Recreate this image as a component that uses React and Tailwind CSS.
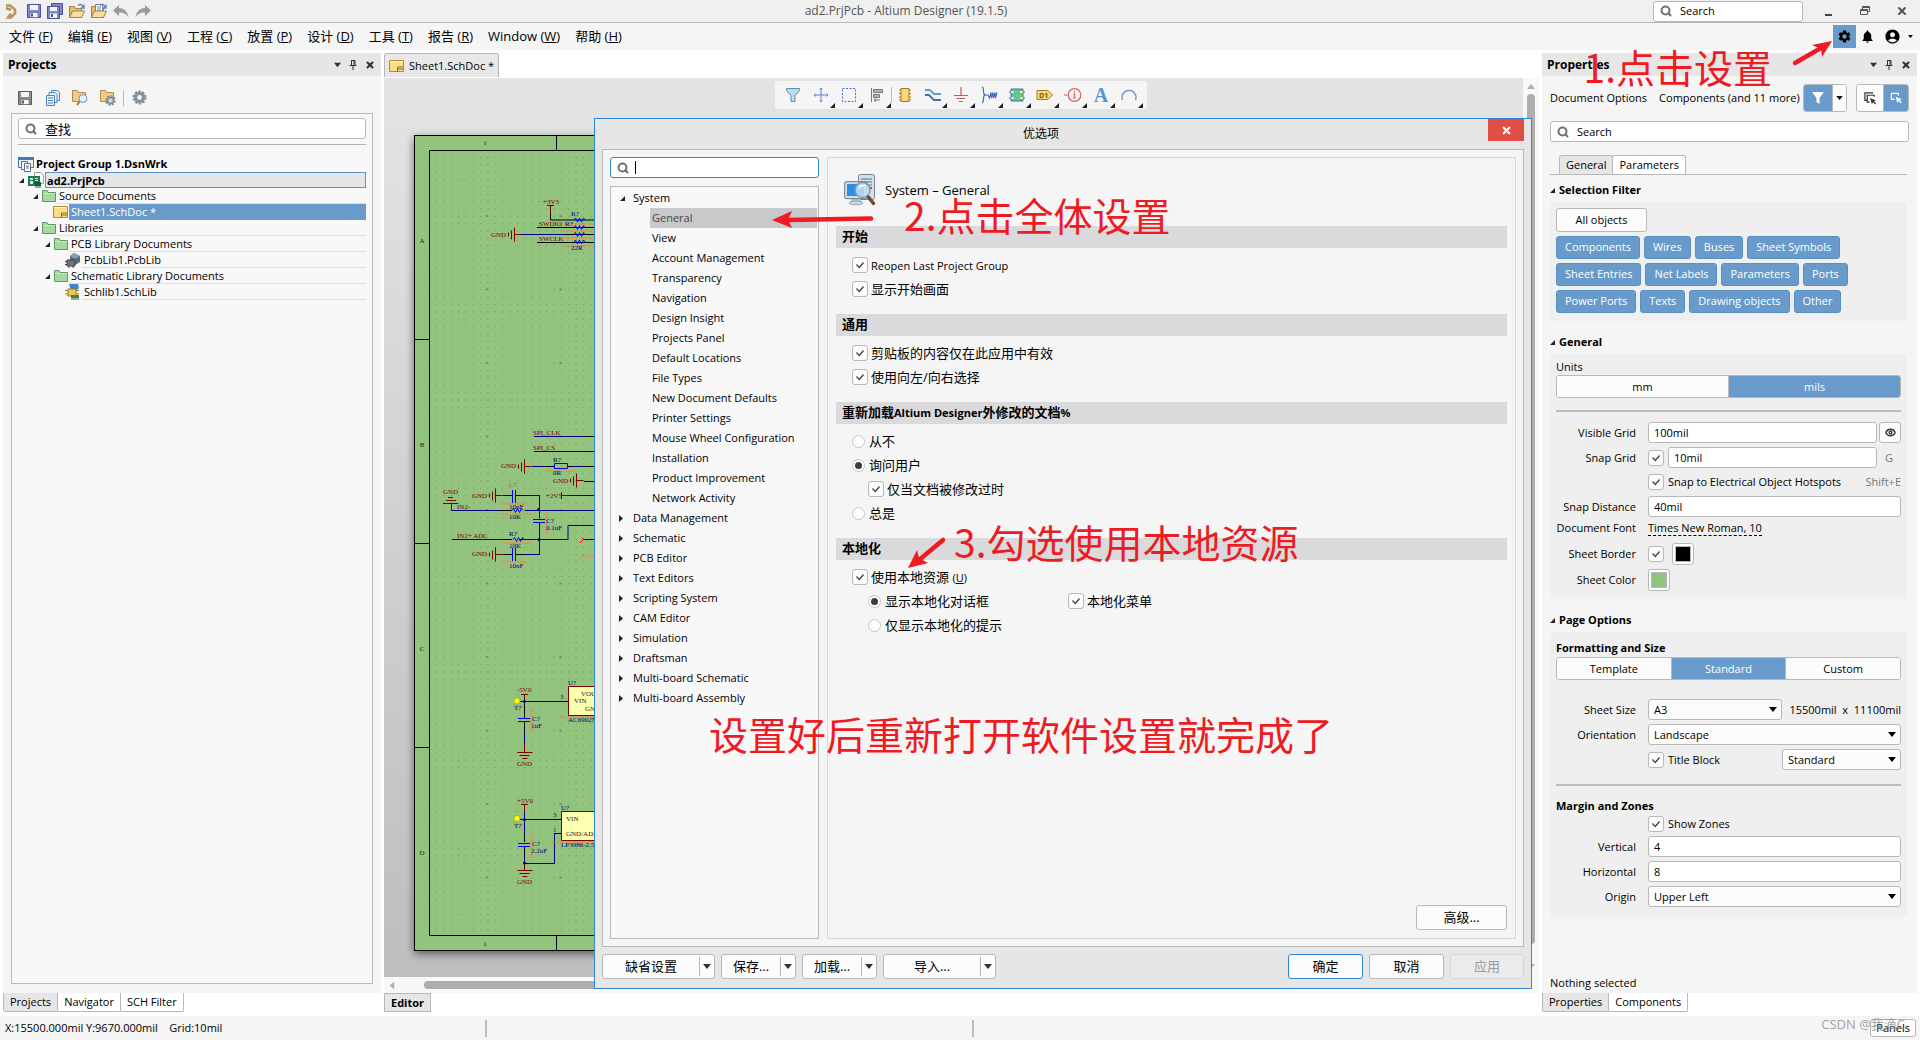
import { MdSettings, MdNotifications, MdAccountCircle } from 'react-icons/md';
import { Search as SearchIcon, X, Eye } from 'lucide-react';

const menus = [
  ['文件', 'F'], ['编辑', 'E'], ['视图', 'V'], ['工程', 'C'], ['放置', 'P'],
  ['设计', 'D'], ['工具', 'T'], ['报告', 'R'], ['Window', 'W'], ['帮助', 'H'],
];

const systemPages = [
  'General', 'View', 'Account Management', 'Transparency', 'Navigation', 'Design Insight',
  'Projects Panel', 'Default Locations', 'File Types', 'New Document Defaults', 'Printer Settings',
  'Mouse Wheel Configuration', 'Installation', 'Product Improvement', 'Network Activity',
];

const otherPages = [
  'Data Management', 'Schematic', 'PCB Editor', 'Text Editors', 'Scripting System', 'CAM Editor',
  'Simulation', 'Draftsman', 'Multi-board Schematic', 'Multi-board Assembly',
];

const filters = [
  ['Components', 'Wires', 'Buses', 'Sheet Symbols'],
  ['Sheet Entries', 'Net Labels', 'Parameters', 'Ports'],
  ['Power Ports', 'Texts', 'Drawing objects', 'Other'],
];

/* ---------- small pieces ---------- */

function Down({ className = 'w-2 h-[5px]' }) {
  return (
    <svg viewBox="0 0 8 5" className={className} fill="currentColor">
      <path d="M0 0h8L4 5z" />
    </svg>
  );
}

function Expanded() {
  return (
    <svg viewBox="0 0 5 5" className="w-[5px] h-[5px] shrink-0" fill="#222">
      <path d="M5 0v5H0z" />
    </svg>
  );
}

function Collapsed() {
  return (
    <svg viewBox="0 0 4 7" className="w-1 h-[7px] shrink-0" fill="#222">
      <path d="M0 0l4 3.5L0 7z" />
    </svg>
  );
}

function Check({ id, label }) {
  return (
    <span className="grid w-4 h-4 shrink-0">
      <input
        id={id}
        type="checkbox"
        defaultChecked
        aria-label={label}
        className="peer [grid-area:1/1] appearance-none w-4 h-4 rounded-[3px] border border-[#b8b8b8] bg-[#fcfcfc]"
      />
      <svg viewBox="0 0 16 16" className="[grid-area:1/1] w-4 h-4 pointer-events-none invisible peer-checked:visible" fill="none" stroke="#444" strokeWidth="1.3">
        <path d="M4.500 7.500l2.800 3 4.200-5" />
      </svg>
    </span>
  );
}

function CheckRow({ id, children, className = '' }) {
  return (
    <div className={`flex items-center gap-[3px] h-6 ${className}`}>
      <Check id={id} />
      <label htmlFor={id}>{children}</label>
    </div>
  );
}

function RadioRow({ id, name, checked, children, className = '' }) {
  return (
    <div className={`flex items-center gap-1 h-6 ${className}`}>
      <span className="grid place-items-center w-[13px] h-[13px]">
        <input
          id={id}
          name={name}
          type="radio"
          defaultChecked={checked}
          className="peer [grid-area:1/1] appearance-none w-[13px] h-[13px] rounded-full border border-[#c4c4c4] bg-[#fcfcfc]"
        />
        <span className="[grid-area:1/1] w-[7px] h-[7px] rounded-full bg-[#3c3c3c] invisible peer-checked:visible pointer-events-none" />
      </span>
      <label htmlFor={id}>{children}</label>
    </div>
  );
}

function SearchBox({ label, placeholder, className, caret }) {
  return (
    <div className={`flex items-center h-[21px] rounded-[3px] border bg-white pl-[6px] ${className}`}>
      <SearchIcon className="w-3 h-3 text-[#707070] shrink-0" strokeWidth={4} />
      {caret && <span className="w-px h-[13px] bg-black ml-[6px]" />}
      <input
        type="text"
        aria-label={label}
        placeholder={placeholder}
        className="min-w-0 flex-1 bg-transparent outline-none pl-2 placeholder:text-black"
      />
    </div>
  );
}

function Field({ id, value, className = '' }) {
  return (
    <input
      id={id}
      type="text"
      defaultValue={value}
      className={`h-[21px] min-w-0 rounded-[3px] border border-[#b8b8b8] bg-white px-[5px] ${className}`}
    />
  );
}

function Select({ id, value, label, className = '' }) {
  return (
    <span className={`grid items-center ${className}`}>
      <select
        id={id}
        aria-label={label}
        className="[grid-area:1/1] appearance-none w-full h-[21px] rounded-[3px] border border-[#b8b8b8] bg-[#fcfcfc] px-[5px]"
      >
        <option>{value}</option>
      </select>
      <Down className="[grid-area:1/1] justify-self-end w-2 h-[5px] mr-[5px] pointer-events-none" />
    </span>
  );
}

function Row({ label, htmlFor, className = '', children }) {
  return (
    <div className={`grid grid-cols-[80px_1fr] gap-x-3 items-center ${className}`}>
      {label ? <label htmlFor={htmlFor} className="text-right whitespace-nowrap">{label}</label> : <span />}
      <div className="flex items-center min-w-0">{children}</div>
    </div>
  );
}

function Segmented({ items, active }) {
  return (
    <div className="flex h-[23px] rounded-[3px] border border-[#b8b8b8] overflow-hidden divide-x divide-[#b8b8b8]">
      {items.map((item) => (
        <button key={item} className={item === active ? 'flex-1 bg-[#689bcb] text-white' : 'flex-1 bg-[#fcfcfc]'}>
          {item}
        </button>
      ))}
    </div>
  );
}

function PanelHeader({ title }) {
  return (
    <div className="flex items-center h-[23px] bg-[#e6e6e6] pl-[5px] pr-[6px] text-[#333]">
      <h2 className="flex-1 font-bold text-[12px] text-black">{title}</h2>
      <div className="flex items-center gap-2">
        <button aria-label="Panel menu"><Down className="w-[7px] h-[6px]" /></button>
        <button aria-label="Pin">
          <svg viewBox="0 0 8 10" className="w-2 h-[10px]" fill="none" stroke="currentColor">
            <path d="M2 .5h4M2.500.5v5M5 .5v5M6 .5v5M.5 5.500h7M4 6v4" />
          </svg>
        </button>
        <button aria-label="Close"><X className="w-[10px] h-[10px]" strokeWidth={5} /></button>
      </div>
    </div>
  );
}

function BottomTab({ active, children }) {
  return (
    <button className={`h-[19px] px-[6px] border border-t-0 border-[#b8b8b8] rounded-b-[2px] -mr-px ${active ? 'bg-[#e6e6e6]' : 'bg-white'}`}>
      {children}
    </button>
  );
}

/* ---------- icons ---------- */

function Floppy({ body = '#8087c4', line = '#4b5396', className = 'w-[14px] h-[14px]' }) {
  return (
    <svg viewBox="0 0 14 14" className={className}>
      <path d="M.5.5h13v13H.5z" fill={body} stroke={line} />
      <path d="M3 1h8v5H3z" fill="#f4f5fb" />
      <path d="M3 8.500h8v5H3z" fill="#f4f5fb" stroke={line} strokeWidth=".6" />
      <path d="M4 9.500h2v3H4z" fill={line} />
    </svg>
  );
}

function FloppyStack() {
  return (
    <svg viewBox="0 0 16 16" className="w-4 h-4">
      <path d="M4.500.5h11v11h-11z" fill="#8087c4" stroke="#4b5396" />
      <path d="M.5 3.500h12v12H.5z" fill="#8087c4" stroke="#4b5396" />
      <path d="M3 4h7v4H3zM3 10.500h7V15H3z" fill="#f4f5fb" />
      <path d="M4 11h2v3H4z" fill="#4b5396" />
    </svg>
  );
}

function OpenFolder({ doc }) {
  return (
    <svg viewBox="0 0 16 16" className="w-4 h-4">
      <path d="M.5 14.500v-11h5l1 2h6v9z" fill="#e3bc72" stroke="#a9823f" />
      {doc && <path d="M4.500 1.500h7v9h-7zM6 4h4M6 6h4M6 8h4" fill="#fff" stroke="#6d86a6" />}
      <path d="M.5 14.500l3-6.500h12l-3 6.500z" fill="#f8dda3" stroke="#a9823f" />
      <path d="M9 2.500c2-2 4-1 5 1.500M15 1.500V5h-3" fill="none" stroke="#4f83b8" strokeWidth="1.300" />
    </svg>
  );
}

function Arrow({ flip }) {
  return (
    <svg viewBox="0 0 16 13" className={flip ? 'w-4 h-[13px] -scale-x-100' : 'w-4 h-[13px]'} fill="#9a9a9a">
      <path d="M6 0v3c5 .2 8.500 3 9.500 9.500C13.500 9 11 7.500 6 7.500V11L0 5.500z" />
    </svg>
  );
}

function TreeFolder() {
  return (
    <svg viewBox="0 0 14 12" className="w-[14px] h-3 shrink-0">
      <path d="M.5 11.500v-11h4.500l1 2h7.500v9z" fill="#a6d8a0" stroke="#5f9a60" />
      <path d="M1 3.500h12" stroke="#c8eac3" />
    </svg>
  );
}

function SheetIcon() {
  return (
    <svg viewBox="0 0 15 12" className="w-[15px] h-3 shrink-0">
      <path d="M.5.5h14v11H.5z" fill="#fbdd85" stroke="#b08a35" />
      <path d="M8.500 7h5.500M8.500 7v4.500M8.500 9h5.500" stroke="#8a6a20" fill="none" />
      <path d="M1.500 1.500h12" stroke="#fff3c8" />
    </svg>
  );
}

function GroupIcon() {
  return (
    <svg viewBox="0 0 16 16" className="w-4 h-4 shrink-0">
      <path d="M.5 1.500h15v10H.5z" fill="#e8f0fa" stroke="#4474b5" />
      <path d="M0 1h16v3H0z" fill="#3f78c6" />
      <path d="M3.500 5.500h6v8h-6z" fill="#fff" stroke="#5d6f88" />
      <path d="M6.500 7.500h6v8h-6zM8 10h3M8 12h3" fill="#fff" stroke="#5d6f88" />
    </svg>
  );
}

function ProjectIcon() {
  return (
    <svg viewBox="0 0 16 16" className="w-4 h-4 shrink-0">
      <path d="M6.500.5h6l3 3v8h-9z" fill="#fff" stroke="#9a9a9a" />
      <path d="M0 4h12v10H0z" fill="#1d7a54" />
      <path d="M2 6h3v2H2zM2 9h3v3H2zM7 6h3v1H7zM7 8h3v1H7z" fill="#d6f3e3" />
      <path d="M7 10h6v4H7z" fill="#0f5c3c" />
      <path d="M8 14v2M10 14v2M12 14v2" stroke="#0f5c3c" />
    </svg>
  );
}

function LibIcon({ schematic }) {
  return schematic ? (
    <svg viewBox="0 0 16 16" className="w-4 h-4 shrink-0">
      <path d="M4 0h9l1 4-3 3H6z" fill="#3f83d6" />
      <path d="M3 5h8v7H3z" fill="#f4c64f" stroke="#a27818" />
      <path d="M0 6.500h3M0 10h3M11 6.500h3M11 10h3" stroke="#a27818" />
      <path d="M6 11h8v3H6z" fill="#3f8a3a" />
      <path d="M7 14v2M9 14v2M11 14v2M13 14v2" stroke="#2f6b2b" />
    </svg>
  ) : (
    <svg viewBox="0 0 16 16" className="w-4 h-4 shrink-0">
      <path d="M9 1l6 3v6l-5 3-5-3V4z" fill="#5c6b7d" />
      <path d="M9 1l6 3-5 3-5-3z" fill="#8b9bb0" />
      <path d="M2 8h8v6H2z" fill="#6f757c" stroke="#3d4248" />
      <path d="M0 9.500h2M0 12.500h2M4 14v2M8 14v2" stroke="#3d4248" />
    </svg>
  );
}

function ComputerIcon() {
  return (
    <svg viewBox="0 0 32 32" className="w-8 h-8">
      <rect x="14.500" y=".5" width="16" height="25" rx="2" fill="#d5e1ea" stroke="#6f8799" />
      <path d="M17 5h11M17 8h11M17 11h11" stroke="#7d96a8" strokeWidth="1.500" />
      <path d="M8 24h8l2 5H6z" fill="#b8c7d3" />
      <ellipse cx="12" cy="29" rx="7" ry="2" fill="#c9d6e0" stroke="#7f94a5" strokeWidth=".7" />
      <rect x=".7" y="7.700" width="22" height="17" rx="1.500" fill="#d3dfe8" stroke="#5f7a90" />
      <path d="M3 10h17v12H3z" fill="#2f8ee0" />
      <path d="M25 13h3v2h-3z" fill="#e03a2f" />
      <path d="M23.500 22l6 7.500" stroke="#6d4a33" strokeWidth="3.500" strokeLinecap="round" />
      <circle cx="18.500" cy="16" r="7.500" fill="#bfe2fb" fillOpacity=".85" stroke="#8c979f" strokeWidth="1.500" />
      <path d="M13.500 15a5.500 5.500 0 0 1 9-3c-4 0-6 1-9 3z" fill="#fff" />
    </svg>
  );
}

const wiringTools = [
  { name: 'Filter', plain: true, art: <path d="M2.500 2.500h13v2l-4.500 5v6H7v-6l-4.500-5z" fill="#b8dcea" stroke="#5c93ab" /> },
  { name: 'Move', art: <path d="M9 2v14M2 9h14M7.500 3.500L9 2l1.500 1.500M7.500 14.500L9 16l1.500-1.500M3.500 7.500L2 9l1.500 1.500M14.500 7.500L16 9l-1.500 1.500" fill="none" stroke="#5b83d2" /> },
  { name: 'Select', art: <path d="M2.500 2.500h13v13h-13z" fill="none" stroke="#4a6fd4" strokeDasharray="2 1.500" /> },
  { name: 'Align', art: <g fill="#b5b5b5" stroke="#777"><path d="M3.500 2v14" /><path d="M5.500 3.500h9v3h-9zM5.500 8.500h6v3h-6z" /><path d="M6 14h6M8 12.500L6 14l2 1.500" fill="none" /></g> },
  { name: 'Part', plain: true, divider: true, art: <g stroke="#a07a22"><path d="M3 4h12M3 7.500h12M3 11h12M3 14h12" /><path d="M5 2.500h8v13H5z" fill="#fbd777" /></g> },
  { name: 'Wire', art: <g fill="none" strokeWidth="1.800"><path d="M1 4h5l4 4h7" stroke="#5d9ecf" /><path d="M1 9h4l5 5h7" stroke="#3c74ad" /></g> },
  { name: 'Power port', art: <path d="M9 1v8M2 9.500h14M4.500 12.500h9M7 15.500h4" fill="none" stroke="#d8534f" strokeWidth="1.200" /> },
  { name: 'Harness', art: <g fill="none" stroke="#4b6fc0" strokeWidth="1.200"><path d="M2 1c3 0 0 7 3 8-3 1 0 7-3 8" /><path d="M5 9h3l1.500 3L11 6.500l.5 5.500L13 6.500l.5 5.500L15 6.500l.5 5.500L17 6.500" /></g> },
  { name: 'Sheet symbol', art: <g><path d="M1 6h16M1 12h16" stroke="#3d6fc4" /><path d="M3 3h12v12H3z" fill="#64c793" stroke="#3d6fc4" /><path d="M3 5h3v2H3zM3 11h3v2H3zM12 5h3v2h-3zM12 11h3v2h-3z" fill="#ffe27a" /></g> },
  { name: 'Port', art: <g><path d="M1 4.500h11l4.500 4.500-4.500 4.500H1z" fill="#f7d878" stroke="#a07a22" /><text x="3" y="11.500" fontSize="7" fontWeight="bold" fill="#7a5a10">D1</text></g> },
  { name: 'Directive', art: <g fill="none" stroke="#dd6262" strokeWidth="1.200"><circle cx="10.500" cy="9" r="6.300" /><path d="M0 9h4M9 8h1.500v4M9 12h3M10.500 5v1.500" /></g> },
  { name: 'Text', art: <text x="9" y="16" fontSize="20" fontWeight="bold" textAnchor="middle" fill="#5594d8" fontFamily="Liberation Serif, serif">A</text> },
  { name: 'Arc', art: <path d="M2.500 14a7 7 0 1 1 13 0" fill="none" stroke="#6d90cc" strokeWidth="1.300" /> },
];

/* ---------- schematic sheet ---------- */

function Gnd({ x, y, side }) {
  // side: the bars run to the left of the pin, otherwise below it
  return side ? (
    <g stroke="#800000" fill="none">
      <path d={`M${x} ${y - 7}v14M${x - 3} ${y - 4}v9M${x - 6} ${y - 2}v4M${x} ${y}h7`} />
    </g>
  ) : (
    <path d={`M${x} ${y - 8}v8M${x - 7} ${y}h15M${x - 5} ${y + 3}h10M${x - 2} ${y + 6}h5`} stroke="#800000" fill="none" />
  );
}

function Resistor({ x, y }) {
  return <path d={`M${x} ${y}l1.500-2 2 4 2-4 2 4 2-4 1.500 2`} stroke="#0000ff" fill="none" />;
}

function Squiggle({ x, y, w }) {
  return <path d={`M${x} ${y}h${w}`} stroke="#ff7f3f" strokeWidth="2" strokeDasharray="1.500 1" opacity=".8" />;
}

function Schematic() {
  return (
    <svg viewBox="384 78 300 899" className="absolute left-0 top-0 w-[300px] h-[899px]" fontFamily="Liberation Serif, serif" fontSize="7">
      <defs>
        <pattern id="dots" x="436" y="157" width="7.350" height="7.350" patternUnits="userSpaceOnUse">
          <rect width="1" height="1" fill="#7c8a66" />
        </pattern>
        <pattern id="marks" x="486" y="215" width="73.500" height="73.500" patternUnits="userSpaceOnUse">
          <rect width="2" height="2" fill="#7b8a68" />
        </pattern>
        <filter id="soft"><feGaussianBlur stdDeviation="4" /></filter>
      </defs>
      <rect x="414" y="138" width="300" height="816" fill="#444" opacity=".8" filter="url(#soft)" />
      <rect x="414.500" y="135.500" width="300" height="815" fill="#92c47d" stroke="#000" />
      <rect x="430" y="151" width="280" height="784" fill="url(#dots)" />
      <rect x="430" y="151" width="280" height="784" fill="url(#marks)" />
      <path d="M700 150.500H429.500v785H700M556.500 135v15M556.500 935v15M414 339.500h15M414 543.500h15M414 747.500h15" fill="none" stroke="#000" />
      <g fill="#222" textAnchor="middle">
        <text x="485" y="145">1</text>
        <text x="485" y="946">1</text>
        <text x="422" y="243">A</text>
        <text x="422" y="447">B</text>
        <text x="422" y="651">C</text>
        <text x="422" y="855">D</text>
      </g>

      {/* SWD header */}
      <path d="M550.500 205v15h44M537 227.500h57M551 234.500h44M537 242.500h57" fill="none" stroke="#000" />
      <path d="M547 205.500h7M550.500 205v9" stroke="#800000" />
      <path d="M521 234.500h44" stroke="#000080" />
      <Gnd x={514.5} y={234.5} side />
      <Squiggle x={564} y={224} w={30} />
      <Squiggle x={564} y={231} w={30} />
      <Squiggle x={564} y={238} w={30} />
      <Squiggle x={564} y={246} w={30} />
      <Resistor x={574} y={220} />
      <Resistor x={574} y={227.5} />
      <Resistor x={574} y={234.5} />
      <Resistor x={574} y={242} />

      {/* ADC inputs */}
      <path d="M534 436.500h50M534 451.500h50M532 466.500h14M570 466.500h16M452 510.500h60M525 510.500h69M452 539.500h60M520 539.500h48v-14h26M539.500 495.500v23M539.500 522v32.500M525 495.500h15M525 554.500h15M568 495.500h16" fill="none" stroke="#000080" />
      <path d="M584 436.500h10M584 451.500h10M546 466.500h8M568 466.500h4M584 466.500h10M584 481.500h10M584 495.500h10M503 495.500h9M516 495.500h9M503 554.500h9M516 554.500h9M584 539.500h10M500 510.500h12M500 539.500h12" stroke="#000" />
      <path d="M554.500 463.500h13v5h-13z" fill="none" stroke="#0000ff" />
      <path d="M512.500 490v13M515.500 490v13M512.500 548v13M515.500 548v13M533 519.500h12M533 522.500h12" stroke="#0000ff" fill="none" />
      <Resistor x={512} y={510.5} />
      <Resistor x={513} y={539.5} />
      <Gnd x={524.5} y={466.5} side />
      <Gnd x={576.5} y={480.5} side />
      <Gnd x={495.5} y={495.5} side />
      <Gnd x={495.5} y={554.5} side />
      <path d="M443 503.500h15M446 500.500h10M448 497.500h5M451.500 503v8M561.500 492v7M562 495.500h6" stroke="#800000" fill="none" />
      <Squiggle x={546} y={471} w={30} />
      <Squiggle x={502} y={504} w={24} />
      <Squiggle x={502} y={514} w={30} />
      <Squiggle x={502} y={543} w={30} />
      <Squiggle x={502} y={562} w={24} />
      <Squiggle x={582} y={556} w={12} />
      <path d="M546.500 512v22M531.500 710v22M531.500 834v24" stroke="#ff7f3f" strokeWidth="2" strokeDasharray="1.500 1" />
      <path d="M580 543l4-4M582 538l3 2" stroke="#f00" />

      {/* negative rail regulator */}
      <path d="M524.500 701v12M524.500 722v24M525 701.500h35" fill="none" stroke="#000080" />
      <path d="M524.500 706v12M524.500 722v12M560 701.500h8M520 701.500h5" stroke="#000" />
      <path d="M521 694.500h7M524.500 694v7M524.500 744v8" stroke="#800000" />
      <path d="M518 718.500h12M518 721.500h12M518 843.500h12M518 846.500h12" stroke="#0000ff" />
      <Gnd x={524.5} y={752.5} />
      <path d="M568.500 686.500h40v29h-40zM561.500 811.500h50v29h-50z" fill="#ffffb0" stroke="#800000" />
      <circle cx="517" cy="701" r="3" fill="#ff0" stroke="#6a8a20" strokeWidth=".5" />
      <circle cx="517" cy="818.500" r="3" fill="#ff0" stroke="#6a8a20" strokeWidth=".5" />

      {/* positive rail regulator */}
      <path d="M524.500 812v30M524.500 847v22M525 819.500h30M525 863.500h29.500v-30" fill="none" stroke="#000080" />
      <path d="M524.500 834v8M524.500 847v9M554 819.500h7M554 833.500h7M520 819.500h5" stroke="#000" />
      <path d="M521 804.500h7M524.500 804v8M524.500 864v7" stroke="#800000" />
      <Gnd x={524.5} y={870.5} />
      <Squiggle x={514} y={706} w={10} />
      <Squiggle x={514} y={824} w={10} />
      <Squiggle x={560} y={717} w={34} />
      <Squiggle x={552} y={842} w={42} />

      <g fill="#000080">
        <circle cx="538.500" cy="509.500" r="1.500" />
        <circle cx="539" cy="539.500" r="1.500" />
        <circle cx="524.500" cy="701.500" r="1.500" />
        <circle cx="524.500" cy="819.500" r="1.500" />
        <circle cx="524.500" cy="863" r="1.500" />
        <text x="571" y="216">R?</text>
        <text x="565" y="226">R?</text>
        <text x="571" y="250">22R</text>
        <text x="553" y="462">R?</text>
        <text x="553" y="475">0R</text>
        <text x="509" y="509">10nF</text>
        <text x="509" y="519">10K</text>
        <text x="509" y="536">R?</text>
        <text x="509" y="548">10K</text>
        <text x="509" y="568">10nF</text>
        <text x="546" y="523">C?</text>
        <text x="546" y="530">0.1uF</text>
        <text x="568" y="685">U?</text>
        <text x="568" y="722">AC6902N</text>
        <text x="514" y="710">T?</text>
        <text x="532" y="721">C?</text>
        <text x="531" y="728">1uF</text>
        <text x="561" y="810">U?</text>
        <text x="561" y="847">LP3986-2.5</text>
        <text x="514" y="828">T?</text>
        <text x="532" y="846">C?</text>
        <text x="531" y="853">2.2uF</text>
      </g>
      <g fill="#800000">
        <text x="543" y="204">+3V3</text>
        <text x="539" y="226">SWDIO</text>
        <text x="491" y="237">GND</text>
        <text x="539" y="241">SWCLK</text>
        <text x="533" y="435">SPI_CLK</text>
        <text x="533" y="450">SPI_CS</text>
        <text x="501" y="468">GND</text>
        <text x="553" y="483">GND</text>
        <text x="472" y="498">GND</text>
        <text x="443" y="494">GND</text>
        <text x="509" y="487" fill="#d2501e">C?</text>
        <text x="546" y="498">+2V5</text>
        <text x="457" y="509">IN2-</text>
        <text x="457" y="538">IN2+ ADC</text>
        <text x="472" y="556">GND</text>
        <text x="517" y="692">-5V0</text>
        <text x="517" y="766">GND</text>
        <text x="517" y="803">+5V0</text>
        <text x="517" y="884">GND</text>
      </g>
      <g fill="#222">
        <text x="581" y="696">VOUT</text>
        <text x="574" y="703">VIN</text>
        <text x="585" y="711">GND</text>
        <text x="566" y="821">VIN</text>
        <text x="566" y="836">GND/ADJ</text>
        <text x="560" y="699">3</text>
        <text x="553" y="817">3</text>
        <text x="553" y="832">1</text>
      </g>
    </svg>
  );
}

/* ---------- window chrome ---------- */

function TitleBar() {
  return (
    <header className="relative flex items-center justify-between h-[23px] bg-[#f0f0f0] border-b border-[#b8b8b8] pl-1 pr-3">
      <div className="flex items-center gap-[6px]">
        <svg viewBox="0 0 13 16" className="w-[13px] h-4 mr-1" fill="none" stroke="#b4965a" strokeWidth="2.500">
          <path d="M2 2.500h4l5 4v4l-4 4H4l3-4M2 5l5 2" />
        </svg>
        <button aria-label="Save"><Floppy /></button>
        <button aria-label="Save all"><FloppyStack /></button>
        <button aria-label="Open"><OpenFolder /></button>
        <button aria-label="Open project"><OpenFolder doc /></button>
        <button aria-label="Undo"><Arrow /></button>
        <button aria-label="Redo"><Arrow flip /></button>
      </div>
      <h1 className="absolute inset-x-0 text-center text-[12px] text-[#555] pr-[108px] pointer-events-none">ad2.PrjPcb - Altium Designer (19.1.5)</h1>
      <div className="flex items-center text-[#555]">
        <SearchBox label="Search" placeholder="Search" className="w-[150px] border-[#b8b8b8] mr-[22px]" />
        <button aria-label="Minimize" className="w-[7px] h-[10px] border-b-2 border-[#444] mr-7" />
        <button aria-label="Restore" className="mr-[26px]">
          <svg viewBox="0 0 10 10" className="w-[10px] h-[10px]" fill="#f0f0f0" stroke="currentColor">
            <path d="M2.500.5h7v5h-7zM2.500 1.500h7" />
            <path d="M.5 3.500h7v5h-7zM.5 4.500h7" />
          </svg>
        </button>
        <button aria-label="Close"><X className="w-3 h-3" strokeWidth={4} /></button>
      </div>
    </header>
  );
}

function MenuBar() {
  return (
    <div className="flex items-center justify-between h-[27px] bg-[#f5f5f5] pl-[9px] pr-[7px]">
      <nav className="flex gap-[15px] text-[13px] pb-[2px]">
        {menus.map(([name, key]) => (
          <button key={key}>{name} (<u>{key}</u>)</button>
        ))}
      </nav>
      <div className="flex items-center">
        <button aria-label="Preferences" className="grid place-items-center w-[23px] h-[23px] bg-[#689bcb] mr-1">
          <MdSettings className="w-[15px] h-[15px]" />
        </button>
        <button aria-label="Notifications" className="mr-[9px]"><MdNotifications className="w-[15px] h-[15px]" /></button>
        <button aria-label="Account" className="flex items-center gap-[7px]">
          <MdAccountCircle className="w-[17px] h-[17px]" />
          <Down className="w-[5px] h-[3px]" />
        </button>
      </div>
    </div>
  );
}

/* ---------- projects panel ---------- */

function TreeRow({ indent, icon, open, children, look = 'border-b border-[#dedede] pl-[2px]' }) {
  return (
    <li className={`flex items-center h-4 ${indent}`}>
      <span className="w-[9px] shrink-0">{open && <Expanded />}</span>
      {icon}
      <span className={`flex-1 h-4 leading-[15px] ml-px whitespace-nowrap ${look}`}>{children}</span>
    </li>
  );
}

function ProjectsPanel() {
  return (
    <aside className="flex flex-col w-[378px] shrink-0">
      <div className="flex flex-col flex-1 bg-[#f5f5f5]">
        <PanelHeader title="Projects" />
        <div className="flex items-center h-[37px] pl-[15px] pt-[6px]">
          <button aria-label="Save" className="mr-[14px]"><Floppy body="#8b8b8b" line="#5b5b5b" /></button>
          <button aria-label="Compile" className="mr-3">
            <svg viewBox="0 0 14 16" className="w-[14px] h-4" fill="#e9f2fb" stroke="#4e82ba">
              <path d="M5.500.5h6l2 2v8h-8z" />
              <path d="M3 2.500h6l2 2v8H3z" />
              <path d="M.5 5.500h8v10h-8zM2 8h5M2 10.500h5M2 13h5" />
            </svg>
          </button>
          <button aria-label="Explore" className="mr-3">
            <svg viewBox="0 0 16 16" className="w-4 h-4">
              <path d="M.5 11.500v-11h5l1 2h7v9z" fill="#f0cb85" stroke="#b18b48" />
              <path d="M8 11l-3 4" stroke="#a77332" strokeWidth="2" />
              <circle cx="11" cy="8.500" r="4" fill="#e3f1fb" stroke="#7891a8" />
            </svg>
          </button>
          <button aria-label="Project options" className="mr-[7px]">
            <svg viewBox="0 0 16 16" className="w-4 h-4">
              <path d="M.5 11.500v-11h5l1 2h7v9z" fill="#f0cb85" stroke="#b18b48" />
              <circle cx="10.500" cy="10.500" r="4.300" fill="none" stroke="#7d8a94" strokeWidth="2" strokeDasharray="2 1.300" />
              <circle cx="10.500" cy="10.500" r="3" fill="#cfd6db" stroke="#7d8a94" strokeWidth="1.500" />
            </svg>
          </button>
          <span className="w-px h-4 bg-[#bbb] mr-2" />
          <button aria-label="Settings">
            <svg viewBox="0 0 16 16" className="w-[15px] h-[15px]" fill="none" stroke="#84929c">
              <circle cx="8" cy="8" r="6.500" strokeWidth="2" strokeDasharray="2.500 1.600" />
              <circle cx="8" cy="8" r="4.300" strokeWidth="3.500" />
            </svg>
          </button>
        </div>
        <div className="flex-1 ml-2 mr-2 mb-[9px] border border-[#b8b8b8] bg-[#f8f8f8] px-[6px] pt-1">
          <SearchBox label="查找" placeholder="查找" className="border-[#b8b8b8] text-[13px]" />
          <div className="border-t border-[#b0b0b0] mt-[5px] mb-[11px]" />
          <ul>
            <li className="flex items-center h-4 gap-[2px] font-bold"><GroupIcon />Project Group 1.DsnWrk</li>
            <TreeRow indent="pl-px" open icon={<ProjectIcon />} look="font-bold bg-[#e6e6e6] border border-[#5b92c8] leading-[13px] pl-px">ad2.PrjPcb</TreeRow>
            <TreeRow indent="pl-[15px]" open icon={<TreeFolder />}>Source Documents</TreeRow>
            <TreeRow indent="pl-[26px]" icon={<SheetIcon />} look="bg-[#689bcb] text-white pl-[2px]">Sheet1.SchDoc *</TreeRow>
            <TreeRow indent="pl-[15px]" open icon={<TreeFolder />}>Libraries</TreeRow>
            <TreeRow indent="pl-[27px]" open icon={<TreeFolder />}>PCB Library Documents</TreeRow>
            <TreeRow indent="pl-[38px]" icon={<LibIcon />}>PcbLib1.PcbLib</TreeRow>
            <TreeRow indent="pl-[27px]" open icon={<TreeFolder />}>Schematic Library Documents</TreeRow>
            <TreeRow indent="pl-[38px]" icon={<LibIcon schematic />}>Schlib1.SchLib</TreeRow>
          </ul>
        </div>
      </div>
      <div className="flex h-[23px] items-start">
        <BottomTab active>Projects</BottomTab>
        <BottomTab>Navigator</BottomTab>
        <BottomTab>SCH Filter</BottomTab>
      </div>
    </aside>
  );
}

/* ---------- preferences dialog ---------- */

function Section({ title, children }) {
  return (
    <section className="mb-[13px]">
      <h3 className="h-[22px] leading-5 bg-[#dadadc] pl-[6px] text-[13px] font-bold mb-[5px]">{title}</h3>
      <div className="pl-4 text-[13px]">{children}</div>
    </section>
  );
}

function SplitButton({ children, className }) {
  return (
    <div className={`flex h-[25px] rounded-[3px] border border-[#b8b8b8] bg-[#fcfcfc] ${className}`}>
      <button className="flex-1 pb-[2px]">{children}</button>
      <button aria-label="More" className="grid place-items-center w-[15px] border-l border-[#b8b8b8] my-[2px] text-[#333]">
        <Down className="w-2 h-[5px]" />
      </button>
    </div>
  );
}

function PreferencesDialog() {
  return (
    <div role="dialog" aria-label="优选项" className="absolute left-[210px] right-[7px] top-[65px] bottom-[27px] flex flex-col bg-[#e6e6e6] border border-[#2f86d4] px-[7px]">
      <div className="relative flex items-center justify-center h-[30px] text-[12px] pr-11">
        <span>优选项</span>
        <button aria-label="Close" className="absolute right-0 top-0 grid place-items-center w-9 h-[22px] bg-[#e04f45] text-white">
          <X className="w-[11px] h-[11px]" strokeWidth={5} />
        </button>
      </div>

      <div className="flex flex-1 min-h-0 gap-2 border border-[#b8b8b8] bg-[#f5f5f5] p-[7px]">
        <div className="flex flex-col gap-2 w-[209px] shrink-0">
          <SearchBox label="Search preferences" className="border-[#2f86d4]" caret />
          <ul className="flex-1 border border-[#b8b8b8] bg-[#f8f8f8] pt-px leading-5">
            <li>
              <button className="flex items-center gap-2 pl-[9px] h-5"><Expanded />System</button>
              <ul className="pl-[39px] pr-px">
                {systemPages.map((page) => (
                  <li key={page}>
                    <button className={page === 'General' ? 'w-full text-left pl-[2px] h-5 bg-[#c9c9cb] text-[#444]' : 'w-full text-left pl-[2px] h-5'}>{page}</button>
                  </li>
                ))}
              </ul>
            </li>
            {otherPages.map((page) => (
              <li key={page}>
                <button className="flex items-center gap-[10px] pl-2 h-5"><Collapsed />{page}</button>
              </li>
            ))}
          </ul>
        </div>

        <div className="flex flex-col flex-1 border border-[#d8d8da] px-2 pb-2">
          <div className="flex items-center gap-[9px] h-[68px] pl-2 pb-[5px] text-[13px]">
            <ComputerIcon />
            <h2>System – General</h2>
          </div>
          <Section title="开始">
            <CheckRow id="reopen"><span className="text-[11px]">Reopen Last Project Group</span></CheckRow>
            <CheckRow id="splash">显示开始画面</CheckRow>
          </Section>
          <Section title="通用">
            <CheckRow id="clip">剪贴板的内容仅在此应用中有效</CheckRow>
            <CheckRow id="lr">使用向左/向右选择</CheckRow>
          </Section>
          <Section title={<>重新加载<span className="text-[11px]">Altium Designer</span>外修改的文档<span className="text-[11px]">%</span></>}>
            <RadioRow id="never" name="reload">从不</RadioRow>
            <RadioRow id="ask" name="reload" checked>询问用户</RadioRow>
            <CheckRow id="modified" className="pl-4">仅当文档被修改过时</CheckRow>
            <RadioRow id="always" name="reload">总是</RadioRow>
          </Section>
          <Section title="本地化">
            <CheckRow id="local">使用本地资源 <span className="text-[11px]">(<u>U</u>)</span></CheckRow>
            <div className="grid grid-cols-[216px_1fr]">
              <RadioRow id="dlg" name="locale" checked className="pl-4">显示本地化对话框</RadioRow>
              <CheckRow id="localmenu">本地化菜单</CheckRow>
            </div>
            <RadioRow id="hint" name="locale" className="pl-4">仅显示本地化的提示</RadioRow>
          </Section>
          <button className="mt-auto self-end w-[91px] h-[25px] rounded-[3px] border border-[#b8b8b8] bg-[#fcfcfc] text-[13px] pb-[2px]">高级...</button>
        </div>
      </div>

      <div className="flex gap-[6px] pt-[7px] pb-[9px] text-[13px]">
        <SplitButton className="w-[113px]">缺省设置</SplitButton>
        <SplitButton className="w-[75px]">保存...</SplitButton>
        <SplitButton className="w-[75px]">加载...</SplitButton>
        <SplitButton className="w-[113px]">导入...</SplitButton>
        <button className="ml-auto w-[75px] h-[25px] rounded-[3px] border border-[#2f86d4] bg-[#fcfcfc] pb-[2px]">确定</button>
        <button className="w-[75px] h-[25px] rounded-[3px] border border-[#b8b8b8] bg-[#fcfcfc] pb-[2px]">取消</button>
        <button disabled className="w-[74px] h-[25px] rounded-[3px] border border-[#d6d6d8] bg-[#ebebed] text-[#999] pb-[2px]">应用</button>
      </div>

      <Note className="left-[309px] top-[75px]">2.点击全体设置</Note>
      <Note className="left-[359px] top-[402px]">3.勾选使用本地资源</Note>
      <Note className="left-[114px] top-[594px]">设置好后重新打开软件设置就完成了</Note>
      <svg viewBox="0 0 104 20" className="absolute left-[176px] top-[90px] w-[104px] h-5 pointer-events-none">
        <path d="M16 11L100 9.500" stroke="#ed1c24" strokeWidth="4.500" strokeLinecap="round" />
        <path d="M1 11L21 2l-4 8.500L21 19z" fill="#ed1c24" />
      </svg>
      <svg viewBox="0 0 40 34" className="absolute left-[312px] top-[417px] w-10 h-[34px] pointer-events-none">
        <path d="M12 24L36 4" stroke="#ed1c24" strokeWidth="4.500" strokeLinecap="round" />
        <path d="M1 32L10 14l2 8 9 5z" fill="#ed1c24" />
      </svg>
    </div>
  );
}

function Note({ children, className }) {
  return (
    <p className={`absolute whitespace-nowrap text-[39px] leading-10 text-[#ed1c24] pointer-events-none font-['Noto_Sans_CJK_SC',sans-serif] ${className}`}>
      {children}
    </p>
  );
}

/* ---------- editor ---------- */

function Editor() {
  return (
    <main className="relative flex flex-col flex-1 min-w-0">
      <div className="h-[25px]">
        <button className="flex items-center gap-[5px] h-6 px-1 rounded-t-[3px] border border-b-0 border-[#b8b8b8] bg-[#e8e8e8]">
          <SheetIcon />Sheet1.SchDoc *
        </button>
      </div>
      <div className="flex flex-1 min-h-0">
        <div className="relative flex-1 overflow-hidden bg-linear-to-b from-[#e4e4e4] to-[#bebebe]">
          <Schematic />
          <div className="relative flex justify-center pt-[3px] pr-[1px]">
            <div className="flex h-7 bg-[#f5f5f5] px-1 rounded-[2px] ml-4">
              {wiringTools.map((tool) => (
                <button
                  key={tool.name}
                  aria-label={tool.name}
                  className={tool.divider ? 'relative w-7 h-7 before:absolute before:left-0 before:top-[6px] before:h-4 before:w-px before:bg-[#bbb]' : 'relative w-7 h-7'}
                >
                  <svg viewBox="0 0 18 18" className="w-[18px] h-[18px] mx-auto overflow-visible">{tool.art}</svg>
                  {!tool.plain && (
                    <svg viewBox="0 0 5 5" className="absolute right-0 bottom-[1px] w-[5px] h-[5px]" fill="#222"><path d="M5 0v5H0z" /></svg>
                  )}
                </button>
              ))}
            </div>
          </div>
        </div>
        <div className="flex flex-col items-center w-4 bg-[#f8f8f8] pt-[6px] text-[#aeaeb0]">
          <Down className="w-2 h-[5px] rotate-180" />
          <div className="w-2 flex-1 rounded-full bg-[#aeaeb0] mt-[5px] mb-5" />
          <Down className="w-2 h-[5px] mb-2" />
        </div>
      </div>
      <div className="flex items-center h-4 bg-[#f8f8f8] pl-1 text-[#aeaeb0]">
        <Down className="w-2 h-[5px] rotate-90" />
        <div className="h-2 flex-1 rounded-full bg-[#aeaeb0] ml-7 mr-10" />
      </div>
      <div className="h-[23px]">
        <button className="h-[19px] px-[6px] border border-[#b8b8b8] bg-[#e6e6e6] font-bold leading-4">Editor</button>
      </div>
      <PreferencesDialog />
    </main>
  );
}

/* ---------- properties panel ---------- */

function Group({ title, children, className }) {
  return (
    <section>
      <h3 className="flex items-center gap-1 h-6 font-bold"><Expanded />{title}</h3>
      <div className={`rounded-[3px] bg-[#efefef] px-[6px] ${className}`}>{children}</div>
    </section>
  );
}

function Swatch({ label, className }) {
  return (
    <button aria-label={label} className="grid place-items-center w-[22px] h-[22px] rounded-[3px] border border-[#b8b8b8] bg-white">
      <span className={`w-4 h-4 border border-[#b8b8b8] ${className}`} />
    </button>
  );
}

function PropertiesPanel() {
  return (
    <aside className="flex flex-col w-[375px] shrink-0">
      <div className="flex flex-col flex-1 bg-[#f5f5f5]">
        <PanelHeader title="Properties" />
        <div className="flex flex-col flex-1 pl-2 pr-[10px]">
          <div className="flex items-center h-11 -mr-[2px]">
            <span>Document Options</span>
            <span className="ml-3 flex-1 whitespace-nowrap">Components (and 11 more)</span>
            <div className="flex h-7 rounded-[3px] border border-[#b8b8b8] overflow-hidden mr-[9px]">
              <button aria-label="Filter" className="grid place-items-center w-7 bg-[#689bcb]">
                <svg viewBox="0 0 12 12" className="w-3 h-3" fill="#fff"><path d="M0 0h12L7.500 6v6l-3-2V6z" /></svg>
              </button>
              <button aria-label="Filter options" className="grid place-items-center w-[14px] bg-[#fcfcfc] border-l border-[#b8b8b8]">
                <Down className="w-[7px] h-1" />
              </button>
            </div>
            <div className="flex h-7 rounded-[3px] border border-[#b8b8b8] overflow-hidden">
              <button aria-label="Select all" className="grid place-items-center w-[26px] bg-[#fcfcfc]">
                <svg viewBox="0 0 14 14" className="w-[13px] h-[13px]" fill="none" stroke="#333" strokeWidth="1.300">
                  <path d="M3 9H1V1h8v1M6 11H3.500V3.500H11V5" />
                  <path d="M6.500 6.500l2 6.500 1.300-2 2.200 2.500 1-1-2.200-2.300 2-1z" fill="#333" stroke="none" />
                </svg>
              </button>
              <button aria-label="Select one" className="grid place-items-center w-[25px] bg-[#689bcb] border-l border-[#b8b8b8]">
                <svg viewBox="0 0 14 14" className="w-[13px] h-[13px]" fill="none" stroke="#fff" strokeWidth="1.300">
                  <path d="M5 8H1.500V1.500H9V4" />
                  <path d="M6 5l2 7 1.500-2.200 2.300 2.500 1-1-2.300-2.300 2.300-1.200z" fill="#fff" stroke="none" />
                </svg>
              </button>
            </div>
          </div>
          <SearchBox label="Search properties" placeholder="Search" className="border-[#b8b8b8] mt-px -mr-[2px]" />
          <div className="flex items-end h-[33px] border-b border-[#b8b8b8] pl-[9px]">
            <button className="h-[19px] px-[6px] border border-b-0 border-[#b8b8b8] rounded-t-[3px] bg-[#e6e6e6]">General</button>
            <button className="h-[19px] px-[6px] border border-b-0 border-[#b8b8b8] rounded-t-[3px] bg-white -ml-px">Parameters</button>
          </div>

          <div className="flex flex-col gap-[9px] pt-[3px]">
            <Group title="Selection Filter" className="flex flex-col gap-1 py-[6px] pb-2">
              <button className="w-[91px] h-6 rounded-[3px] border border-[#b8b8b8] bg-[#fcfcfc] pb-px">All objects</button>
              {filters.map((row) => (
                <div key={row[0]} className="flex gap-1">
                  {row.map((name) => (
                    <button key={name} className="h-[23px] px-2 rounded-[3px] border border-[#5a8fc2] bg-[#689bcb] text-white whitespace-nowrap pb-px">{name}</button>
                  ))}
                </div>
              ))}
            </Group>

            <Group title="General" className="pt-[5px] pb-2">
              <div className="h-4">Units</div>
              <Segmented items={['mm', 'mils']} active="mils" />
              <div className="border-t-2 border-[#bdbdbd] mt-3 mb-[10px]" />
              <div className="flex flex-col gap-1">
                <Row label="Visible Grid" htmlFor="vgrid">
                  <Field id="vgrid" value="100mil" className="flex-1" />
                  <button aria-label="Toggle grid" className="grid place-items-center w-[22px] h-[21px] ml-[2px] rounded-[3px] border border-[#b8b8b8] bg-[#fcfcfc]">
                    <Eye className="w-[11px] h-[11px] text-[#333]" strokeWidth={3} />
                  </button>
                </Row>
                <Row label="Snap Grid" htmlFor="sgrid">
                  <Check id="sgrid-on" label="Snap grid on" />
                  <Field id="sgrid" value="10mil" className="flex-1 ml-1" />
                  <span className="w-6 text-center text-[#777]">G</span>
                </Row>
                <Row className="h-[20px]">
                  <Check id="hotspots" />
                  <label htmlFor="hotspots" className="flex-1 pl-1 whitespace-nowrap">Snap to Electrical Object Hotspots</label>
                  <span className="text-[#777]">Shift+E</span>
                </Row>
                <Row label="Snap Distance" htmlFor="sdist"><Field id="sdist" value="40mil" className="flex-1" /></Row>
              </div>
              <Row label="Document Font" className="h-[22px]">
                <a href="#font" className="border-b border-dashed border-black leading-[15px]">Times New Roman, 10</a>
              </Row>
              <Row label="Sheet Border" htmlFor="border" className="mt-1">
                <Check id="border" />
                <span className="w-2" />
                <Swatch label="Border colour" className="bg-black" />
              </Row>
              <Row label="Sheet Color" className="mt-1"><Swatch label="Sheet colour" className="bg-[#92c47d]" /></Row>
            </Group>

            <Group title="Page Options" className="pt-[7px] pb-[10px]">
              <h4 className="font-bold h-[18px] leading-[18px]">Formatting and Size</h4>
              <Segmented items={['Template', 'Standard', 'Custom']} active="Standard" />
              <div className="flex flex-col gap-1 mt-[19px]">
                <Row label="Sheet Size" htmlFor="size">
                  <Select id="size" value="A3" className="w-[134px]" />
                  <span className="flex-1 text-right whitespace-pre">15500mil  x  11100mil</span>
                </Row>
                <Row label="Orientation" htmlFor="orient"><Select id="orient" value="Landscape" className="flex-1" /></Row>
                <Row>
                  <Check id="tblock" />
                  <label htmlFor="tblock" className="flex-1 pl-1">Title Block</label>
                  <Select value="Standard" label="Title block style" className="w-[119px]" />
                </Row>
              </div>
              <div className="border-t-2 border-[#bdbdbd] mt-[14px] mb-[11px]" />
              <h4 className="font-bold h-[18px] leading-[18px]">Margin and Zones</h4>
              <div className="flex flex-col gap-1">
                <Row className="h-[17px]">
                  <Check id="zones" />
                  <label htmlFor="zones" className="pl-1">Show Zones</label>
                </Row>
                <Row label="Vertical" htmlFor="vert"><Field id="vert" value="4" className="flex-1" /></Row>
                <Row label="Horizontal" htmlFor="horz"><Field id="horz" value="8" className="flex-1" /></Row>
                <Row label="Origin" htmlFor="origin"><Select id="origin" value="Upper Left" className="flex-1" /></Row>
              </div>
            </Group>
          </div>
          <p className="mt-auto pb-[2px]">Nothing selected</p>
        </div>
      </div>
      <div className="flex h-[23px] items-start">
        <BottomTab active>Properties</BottomTab>
        <BottomTab>Components</BottomTab>
      </div>
    </aside>
  );
}

export default function App() {
  return (
    <div className="relative flex flex-col h-screen min-h-[1000px] overflow-hidden bg-white text-black text-[11px] leading-4 font-['Open_Sans','Noto_Sans_CJK_SC',sans-serif]">
      <TitleBar />
      <MenuBar />
      <div className="flex flex-1 min-h-0 gap-[3px] px-[3px] pt-[3px]">
        <ProjectsPanel />
        <Editor />
        <PropertiesPanel />
      </div>
      <footer className="grid grid-cols-[480px_487px_1fr] items-center h-6 bg-[#f5f5f5] pl-[5px] pr-1">
        <span className="whitespace-pre">X:15500.000mil Y:9670.000mil    Grid:10mil</span>
        <span className="h-[17px] border-l-2 border-[#bdbdbd]" />
        <div className="flex items-center h-[17px] border-l-2 border-[#bdbdbd]">
          <button className="ml-auto h-[18px] px-[5px] rounded-[3px] border border-[#b8b8b8] bg-[#fcfcfc] leading-4">Panels</button>
        </div>
      </footer>

      <Note className="right-[148px] top-[46px]">1.点击设置</Note>
      <svg viewBox="0 0 42 28" className="absolute right-[87px] top-[40px] w-[42px] h-7 pointer-events-none">
        <path d="M4 23L30 8" stroke="#ed1c24" strokeWidth="4.500" strokeLinecap="round" />
        <path d="M41 1L31 17l-1-8-9-4z" fill="#ed1c24" />
      </svg>
      <p className="absolute right-[15px] bottom-[6px] text-[13px] leading-5 text-[#8a8a8a]/80 pointer-events-none">CSDN @我滴C</p>
    </div>
  );
}
